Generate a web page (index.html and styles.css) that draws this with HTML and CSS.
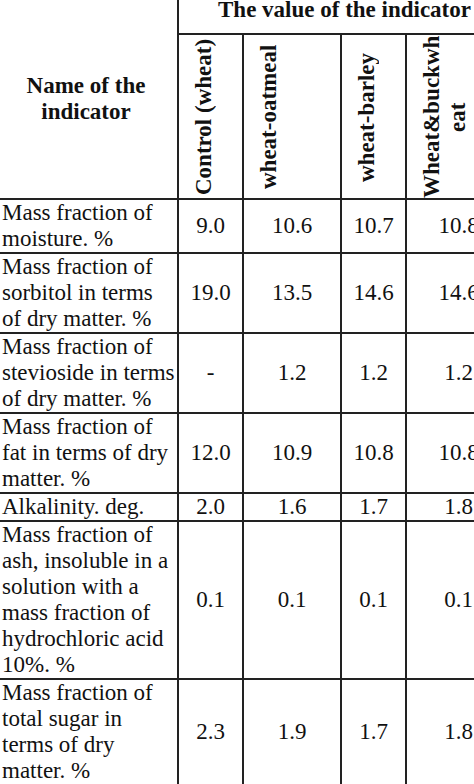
FILE: index.html
```html
<!DOCTYPE html>
<html lang="en">
<head>
  <meta charset="UTF-8">
  <title>Indicators</title>
  <link rel="stylesheet" href="styles.css">
</head>
<body>
  <!-- indicator table -->
  <table class="ind-table">
    <colgroup>
      <col class="col-name">
      <col class="col-narrow">
      <col class="col-wide">
      <col class="col-narrow">
      <col class="col-last">
    </colgroup>
    <tr class="row-top">
      <th rowspan="2" class="head-name">Name of the<br>indicator</th>
      <th colspan="4" class="head-value">The value of the indicator</th>
    </tr>
    <tr class="row-head">
      <th class="head-rot"><div class="rot">Control (wheat)</div></th>
      <th class="head-rot"><div class="rot">wheat-oatmeal</div></th>
      <th class="head-rot"><div class="rot">wheat-barley</div></th>
      <th class="head-rot"><div class="rot">Wheat&amp;buckwh<br>eat</div></th>
    </tr>
    <tr class="h2">
      <td class="name">Mass fraction of<br>moisture. %</td>
      <td>9.0</td><td>10.6</td><td>10.7</td><td>10.8</td>
    </tr>
    <tr class="h3">
      <td class="name">Mass fraction of<br>sorbitol in terms<br>of dry matter. %</td>
      <td>19.0</td><td>13.5</td><td>14.6</td><td>14.6</td>
    </tr>
    <tr class="h3b">
      <td class="name">Mass fraction of<br>stevioside in terms<br>of dry matter. %</td>
      <td>-</td><td>1.2</td><td>1.2</td><td>1.2</td>
    </tr>
    <tr class="h3b">
      <td class="name">Mass fraction of<br>fat in terms of dry<br>matter. %</td>
      <td>12.0</td><td>10.9</td><td>10.8</td><td>10.8</td>
    </tr>
    <tr class="h1">
      <td class="name">Alkalinity. deg.</td>
      <td>2.0</td><td>1.6</td><td>1.7</td><td>1.8</td>
    </tr>
    <tr class="h6">
      <td class="name">Mass fraction of<br>ash, insoluble in a<br>solution with a<br>mass fraction of<br>hydrochloric acid<br>10%. %</td>
      <td>0.1</td><td>0.1</td><td>0.1</td><td>0.1</td>
    </tr>
    <tr class="h4">
      <td class="name">Mass fraction of<br>total sugar in<br>terms of dry<br>matter. %</td>
      <td>2.3</td><td>1.9</td><td>1.7</td><td>1.8</td>
    </tr>
  </table>
</body>
</html>
```

FILE: styles.css
```css
body {
  margin: 0;
  background: #fff;
  width: 474px;
  height: 784px;
  overflow: hidden;
}
.ind-table {
  border-collapse: collapse;
  table-layout: fixed;
  width: 517px;
  margin: -2px 0 0 -7px;
  font-family: "Liberation Serif", "Times New Roman", serif;
  font-size: 23px;
  line-height: 26px;
  color: #111;
}
.col-name { width: 184px; }
.col-narrow { width: 65px; }
.col-wide { width: 98px; }
.col-last { width: 105px; }

.ind-table th,
.ind-table td {
  border: 2px solid #222;
  padding: 0;
  text-align: center;
  vertical-align: middle;
  white-space: nowrap;
}
.ind-table th {
  font-weight: bold;
}
/* row heights */
.row-top { height: 35px; }
.row-head { height: 165px; }
.h1 { height: 26px; }
.h2 { height: 53px; }
.h3 { height: 80px; }
.h3b { height: 79px; }
.h4 { height: 106px; }
.h6 { height: 157px; }

.ind-table .head-value {
  vertical-align: top;
  line-height: 20px;
}
.ind-table .head-rot {
  text-align: left;
  padding-left: 12px;
}
.rot {
  writing-mode: vertical-rl;
  transform: rotate(180deg);
  height: 162px;
  text-align: center;
}
.ind-table td.name {
  text-align: left;
  padding: 0 4px 0 7px;
}
```
